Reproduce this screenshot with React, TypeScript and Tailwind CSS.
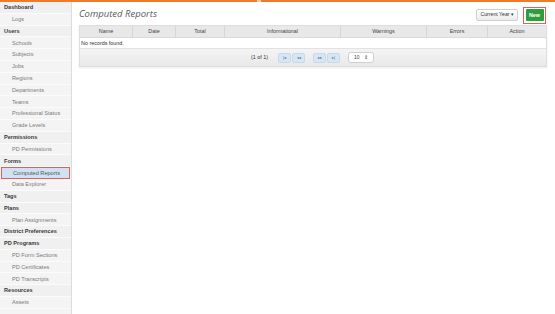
import React from "react";

type Item = { label: string; header?: boolean; active?: boolean };

const items: Item[] = [
  { label: "Dashboard", header: true },
  { label: "Logs" },
  { label: "Users", header: true },
  { label: "Schools" },
  { label: "Subjects" },
  { label: "Jobs" },
  { label: "Regions" },
  { label: "Departments" },
  { label: "Teams" },
  { label: "Professional Status" },
  { label: "Grade Levels" },
  { label: "Permissions", header: true },
  { label: "PD Permissions" },
  { label: "Forms", header: true },
  { label: "Computed Reports", active: true },
  { label: "Data Explorer" },
  { label: "Tags", header: true },
  { label: "Plans", header: true },
  { label: "Plan Assignments" },
  { label: "District Preferences", header: true },
  { label: "PD Programs", header: true },
  { label: "PD Form Sections" },
  { label: "PD Certificates" },
  { label: "PD Transcripts" },
  { label: "Resources", header: true },
  { label: "Assets" },
  { label: "" },
];

const cols = [
  { label: "Name", w: "w-[53px]" },
  { label: "Date", w: "w-[43px]" },
  { label: "Total", w: "w-[49px]" },
  { label: "Informational", w: "w-[116px]" },
  { label: "Warnings", w: "w-[86px]" },
  { label: "Errors", w: "w-[61px]" },
  { label: "Action", w: "flex-1" },
];

function PagerBtn({ children }: { children: React.ReactNode }) {
  return (
    <div className="w-[13px] h-[10px] rounded-[2px] bg-[#d6e6f4] border border-[#c5d9ec] flex items-center justify-center text-[4px] text-[#55708c] leading-none">
      {children}
    </div>
  );
}

export default function App() {
  return (
    <div
      className="w-[555px] h-[314px] bg-white overflow-hidden flex flex-col"
      style={{ fontFamily: '"Liberation Sans", Arial, sans-serif' }}
    >
      <div className="h-[2px] bg-[#f07a2a] shrink-0 flex justify-center">
        <div className="w-[4px] h-[2px] bg-[#f7c9a3] ml-[-38px]" />
      </div>
      <div className="flex flex-1 min-h-0">
        {/* Sidebar */}
        <div className="w-[72px] shrink-0 bg-[#f2f2f2] border-r border-[#dcdcdc] flex flex-col">
          {items.map((it, i) =>
            it.active ? (
              <div
                key={i}
                className="h-[11.8px] shrink-0 mx-[1px] bg-[#cfe2f4] border-[1.5px] border-[#e0605c] flex items-center pl-[11px] text-[5.6px] text-[#555]"
              >
                {it.label}
              </div>
            ) : (
              <div
                key={i}
                className={
                  "h-[11.8px] shrink-0 border-b border-[#fbfbfb] flex items-center text-[5.6px] whitespace-nowrap " +
                  (it.header
                    ? "pl-[4px] font-bold text-[#3a3a3a] bg-[#f0f0f0]"
                    : "pl-[12px] text-[#7a7a7a] bg-[#f4f4f4]")
                }
              >
                {it.label}
              </div>
            )
          )}
        </div>

        {/* Main */}
        <div className="flex-1 pl-[7px] pr-[8px] flex flex-col">
          <div className="h-[23px] flex items-center justify-between">
            <div
              className="italic text-[9.5px] text-[#5a5a5a] pt-[2px]"
              style={{ fontFamily: '"Open Sans", sans-serif' }}
            >
              Computed Reports
            </div>
            <div className="flex items-center gap-[5px] pt-[3px] pr-[1px]">
              <div className="h-[12px] px-[3px] rounded-[2px] border border-[#cfcfcf] bg-gradient-to-b from-white to-[#ececec] flex items-center text-[5.2px] text-[#333]">
                Current Year ▾
              </div>
              <div className="p-[1.5px] border-[1.5px] border-[#e0605c]">
                <div className="h-[12px] w-[18px] rounded-[1px] bg-[#2f9d3b] flex items-center justify-center text-[5.4px] font-bold text-white">
                  New
                </div>
              </div>
            </div>
          </div>

          <div className="border border-[#dedede] shadow-[0_1px_2px_rgba(0,0,0,0.08)]">
            <div className="h-[12px] flex bg-[#e8e8e8] border-b border-[#dadada]">
              {cols.map((c, i) => (
                <div
                  key={c.label}
                  className={
                    c.w +
                    " shrink-0 flex items-center justify-center text-[5.4px] text-[#444] " +
                    (i < cols.length - 1 ? "border-r border-[#d6d6d6]" : "")
                  }
                >
                  {c.label}
                </div>
              ))}
            </div>
            <div className="h-[10px] flex items-center pl-[1px] text-[5.4px] text-[#333] bg-white">
              No records found.
            </div>
            <div className="h-[18px] bg-gradient-to-b from-[#f4f4f4] to-[#e9e9e9] border-t border-[#e2e2e2] flex items-center pl-[171px]">
              <span className="text-[5.4px] text-[#333] mr-[10px]">(1 of 1)</span>
              <div className="flex gap-[1px]">
                <PagerBtn>|◂</PagerBtn>
                <PagerBtn>◂◂</PagerBtn>
              </div>
              <div className="flex gap-[1px] ml-[8px]">
                <PagerBtn>▸▸</PagerBtn>
                <PagerBtn>▸|</PagerBtn>
              </div>
              <div className="ml-[8px] h-[11px] w-[26px] rounded-[3px] border border-[#cfcfcf] bg-white flex items-center justify-between px-[5px] text-[5px] text-[#444]">
                <span>10</span>
                <span className="text-[5px]">⇕</span>
              </div>
            </div>
          </div>
        </div>
      </div>
    </div>
  );
}
